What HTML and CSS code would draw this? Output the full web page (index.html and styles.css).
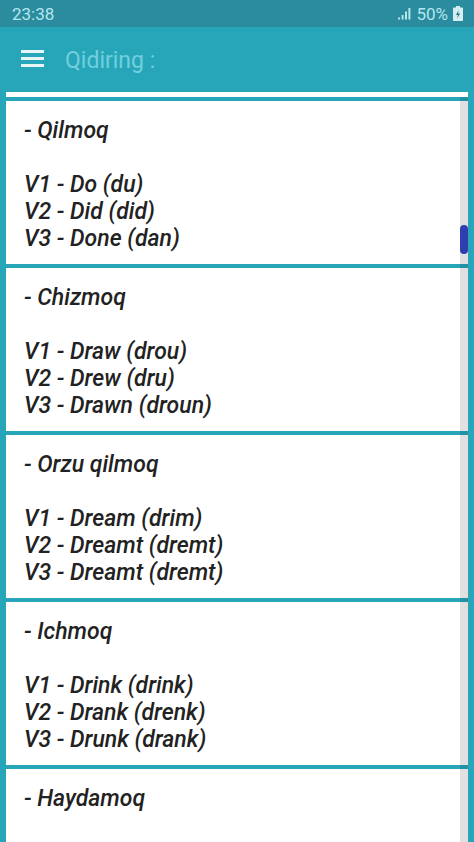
FILE: index.html
```html
<!DOCTYPE html>
<html lang="en">
<head>
  <meta charset="UTF-8">
  <meta name="viewport" content="width=device-width, initial-scale=1.0">
  <title>Qidiring</title>
  <link rel="stylesheet" href="styles.css">
</head>
<body>
  <div class="status-bar">
    <span>23:38</span>
    <div class="status-right">
      <svg class="signal" width="14" height="13" viewBox="0 0 14 13"><path d="M1 10.500h2v2.100H1zM4.600 8h2v4.600h-2zM8 4.500h2v8.100H8zM11.400 1h2v11.600h-2z" fill="#b5e6ec"/></svg>
      <span>50%</span>
      <svg class="battery" width="10" height="15" viewBox="0 0 10 15"><path d="M3 0h4v1.500h2a1 1 0 0 1 1 1V14a1 1 0 0 1-1 1H1a1 1 0 0 1-1-1V2.500a1 1 0 0 1 1-1h2z" fill="#d5eef2"/><path d="M5.800 4 3 9h2l-.8 3.500L7 7.500H5z" fill="#1f6f7e"/></svg>
    </div>
  </div>

  <div class="app-bar">
    <div class="menu-icon"><span></span><span></span><span></span></div>
    <span class="search-hint">Qidiring :</span>
  </div>

  <div class="list">
    <div class="top-strip"></div>

    <div class="card">
      <p>- Qilmoq</p>
      <p>&nbsp;</p>
      <p>V1 - Do (du)</p>
      <p>V2 - Did (did)</p>
      <p>V3 - Done (dan)</p>
    </div>
    <div class="card">
      <p>- Chizmoq</p>
      <p>&nbsp;</p>
      <p>V1 - Draw (drou)</p>
      <p>V2 - Drew (dru)</p>
      <p>V3 - Drawn (droun)</p>
    </div>
    <div class="card">
      <p>- Orzu qilmoq</p>
      <p>&nbsp;</p>
      <p>V1 - Dream (drim)</p>
      <p>V2 - Dreamt (dremt)</p>
      <p>V3 - Dreamt (dremt)</p>
    </div>
    <div class="card">
      <p>- Ichmoq</p>
      <p>&nbsp;</p>
      <p>V1 - Drink (drink)</p>
      <p>V2 - Drank (drenk)</p>
      <p>V3 - Drunk (drank)</p>
    </div>
    <div class="card last">
      <p>- Haydamoq</p>
    </div>

    <div class="scroll-track"></div>
    <div class="scroll-thumb"></div>
  </div>
</body>
</html>
```

FILE: styles.css
```css
html, body {
  height: 100%;
}

body {
  font-family: 'Roboto', sans-serif;
  margin: 0;
  padding: 0;
  overflow: hidden;
  display: flex;
  flex-direction: column;
  background: #27a6ba;
}

.status-bar {
  height: 27px;
  flex-shrink: 0;
  display: flex;
  align-items: center;
  justify-content: space-between;
  padding: 0 11px 0 12px;
  background: #2a8c9e;
  color: #b5e6ec;
  font-size: 17px;
}

.status-right {
  display: flex;
  align-items: center;
  gap: 5px;
}

.app-bar {
  height: 65px;
  flex-shrink: 0;
  display: flex;
  align-items: center;
  padding-left: 21px;
  background: #27a6ba;
}

.menu-icon {
  width: 23px;
  display: flex;
  flex-direction: column;
  gap: 4px;
  margin-bottom: 2px;
}

.menu-icon span {
  height: 3px;
  background: #e6f6f8;
}

.search-hint {
  margin-left: 21px;
  margin-top: 2px;
  font-size: 23px;
  color: #72cfdc;
}

.list {
  position: relative;
  flex: 1;
  display: flex;
  flex-direction: column;
  padding: 0 6px;
}

.top-strip {
  height: 5px;
  margin-bottom: 4px;
  background: #fff;
}

.card {
  height: 163px;
  box-sizing: border-box;
  margin-bottom: 4px;
  padding: 16px 18px 0;
  background: #fff;
}

.card.last {
  height: auto;
  flex: 1;
  margin-bottom: 0;
}

.card p {
  margin: 0;
  font-size: 23px;
  line-height: 27px;
  font-weight: 500;
  font-style: italic;
  color: #222;
}

.scroll-track {
  position: absolute;
  top: 5px;
  right: 6px;
  bottom: 0;
  width: 8px;
  background: rgba(0, 0, 0, 0.12);
}

.scroll-thumb {
  position: absolute;
  top: 133px;
  right: 6px;
  width: 8px;
  height: 29px;
  border-radius: 4px;
  background: #2f3fb0;
}
```
